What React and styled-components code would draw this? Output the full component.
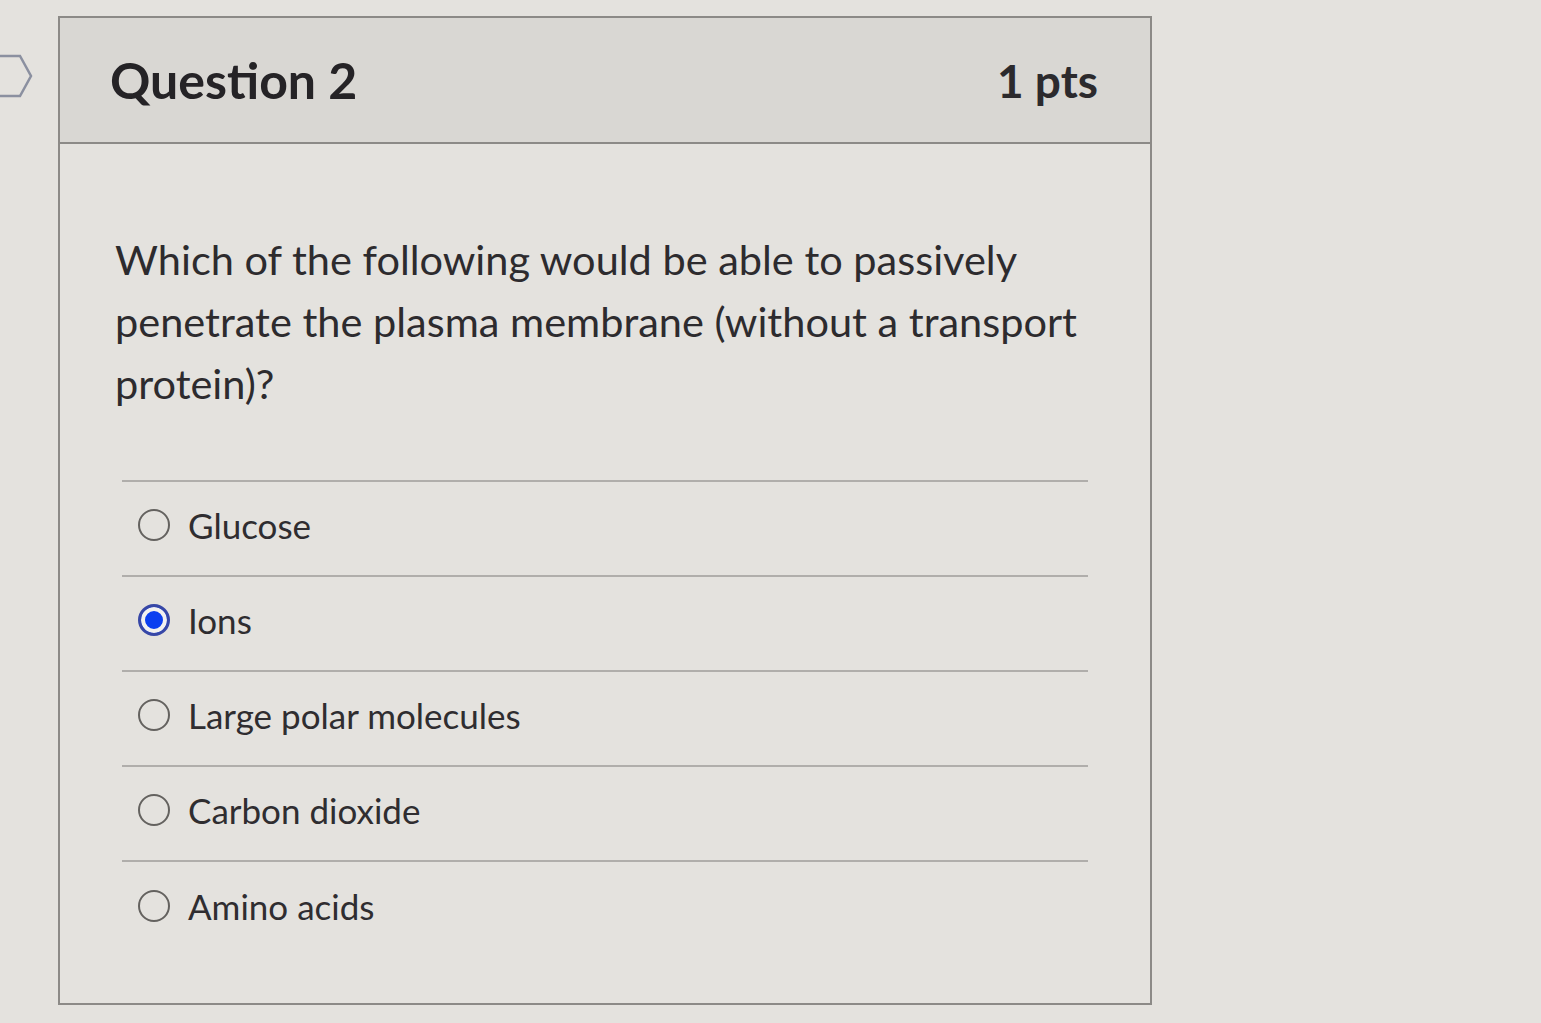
import React, { useState } from "react"
import styled, { createGlobalStyle } from "styled-components"

const GlobalStyle = createGlobalStyle`
  html, body {
    margin: 0;
    padding: 0;
    background: #e4e2de;
  }
  body {
    font-family: Lato, "Open Sans", sans-serif;
    color: #2b292c;
  }
`

const Page = styled.div`
  display: flex;
  align-items: flex-start;
  padding-top: 16px;
  min-height: 1007px;
`

const MarkerColumn = styled.div`
  width: 58px;
  padding-top: 38px;
  display: flex;
`

const QuestionCard = styled.div`
  width: 1094px;
  border: 2px solid #8c8a87;
  box-sizing: border-box;
  min-height: 989px;
  display: flex;
  flex-direction: column;
`

const Header = styled.div`
  height: 126px;
  box-sizing: border-box;
  background: #d9d7d3;
  border-bottom: 2px solid #8c8a87;
  display: flex;
  align-items: center;
  justify-content: space-between;
  padding: 0 52px 0 50px;
`

const Title = styled.h2`
  margin: 0;
  font-size: 50px;
  font-weight: 700;
  color: #252326;
`

const Points = styled.span`
  font-size: 46px;
  font-weight: 700;
  color: #2c2a2d;
`

const Body = styled.div`
  padding: 84px 62px 0 55px;
`

const QuestionText = styled.p`
  margin: 0;
  font-size: 41.5px;
  line-height: 62px;
  color: #2d2b2e;
`

const Answers = styled.div`
  margin: 66px 0 0 7px;
  border-top: 2px solid #b0aeab;
`

const Answer = styled.label`
  display: flex;
  align-items: center;
  gap: 18px;
  height: 95px;
  box-sizing: border-box;
  padding: 0 0 8px 16px;
  border-bottom: ${(p) => (p.last ? "none" : "2px solid #b0aeab")};
  font-size: 35px;
  color: #2f2d30;
  cursor: pointer;
`

const Radio = styled.span`
  width: 32px;
  height: 32px;
  box-sizing: border-box;
  border-radius: 50%;
  flex-shrink: 0;
  border: ${(p) => (p.checked ? "3px solid #3747a6" : "2px solid #64625f")};
  background: ${(p) => (p.checked ? "#0b3ff0" : "transparent")};
  box-shadow: ${(p) => (p.checked ? "inset 0 0 0 4px #f2f1ef" : "none")};
`

const answers = [
  "Glucose",
  "Ions",
  "Large polar molecules",
  "Carbon dioxide",
  "Amino acids",
]

const App = () => {
  const [selected, setSelected] = useState("Ions")

  return (
    <>
      <GlobalStyle />
      <Page>
        <MarkerColumn>
          <svg width="34" height="44" viewBox="0 0 34 44">
            <path d="M-4 2 H20 L31 22 L20 42 H-4" fill="none" stroke="#8b90a0" strokeWidth="2.5" />
          </svg>
        </MarkerColumn>
        <QuestionCard>
          <Header>
            <Title>Question 2</Title>
            <Points>1 pts</Points>
          </Header>
          <Body>
            <QuestionText>
              Which of the following would be able to passively penetrate the plasma membrane (without a transport protein)?
            </QuestionText>
            <Answers>
              {answers.map((a, i) => (
                <Answer key={a} last={i === answers.length - 1} onClick={() => setSelected(a)}>
                  <Radio checked={selected === a} />
                  {a}
                </Answer>
              ))}
            </Answers>
          </Body>
        </QuestionCard>
      </Page>
    </>
  )
}

export default App
